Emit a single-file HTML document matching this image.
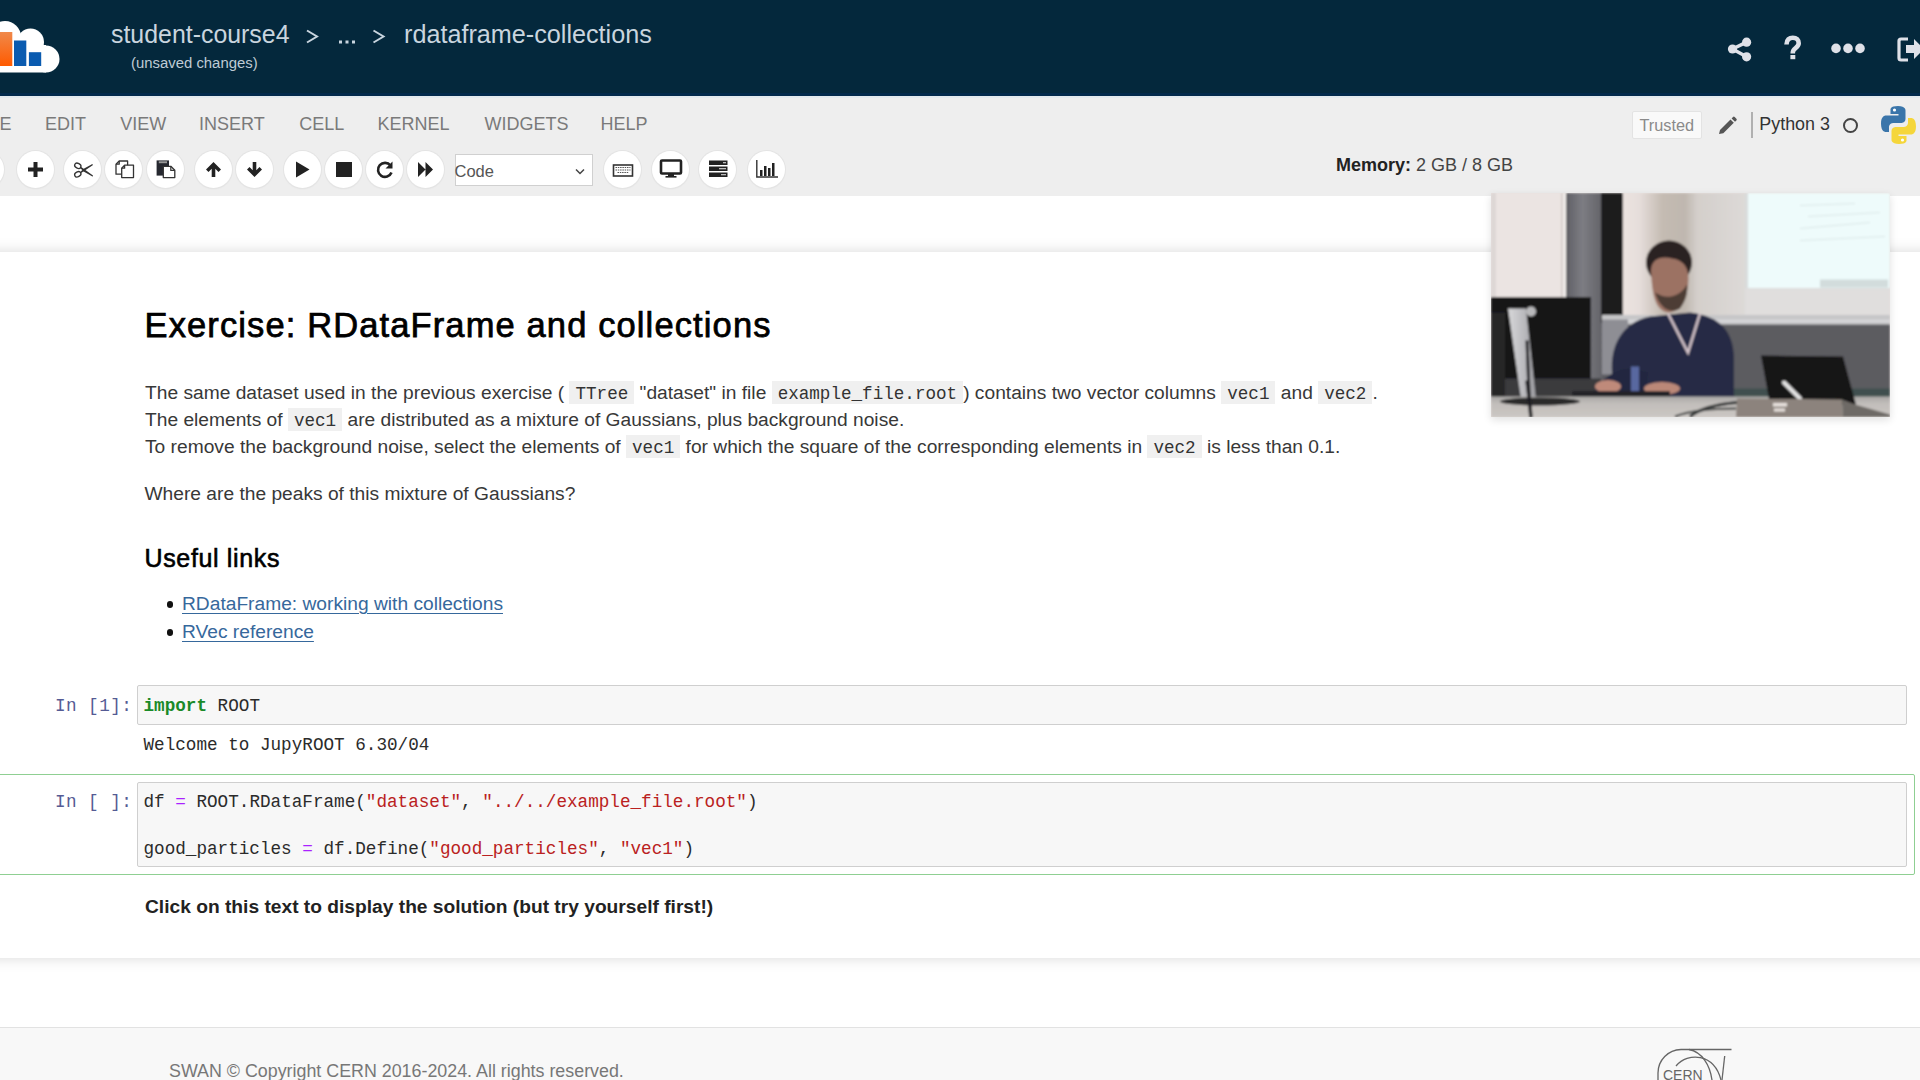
<!DOCTYPE html>
<html><head><meta charset="utf-8">
<style>
*{margin:0;padding:0;box-sizing:border-box}
html,body{width:1920px;height:1080px;overflow:hidden;background:#fff;font-family:"Liberation Sans",sans-serif}
.a{position:absolute;white-space:pre;line-height:1}
.m{font-family:"Liberation Mono",monospace}
#hdr{position:absolute;left:0;top:0;width:1920px;height:96px;background:#04283c}
#hdr .t{color:#c9d5df;font-size:25.2px}
#menu{position:absolute;left:0;top:96px;width:1920px;height:100px;background:#eeeeee}
.mi{font-size:18px;color:#7a7a7a;top:115px}
.btn{position:absolute;top:151px;width:37px;height:37px;border-radius:50%;background:#fff;box-shadow:0 0 0 1px #e4e4e4,0 1px 2px rgba(0,0,0,.06)}
.btn svg{position:absolute;left:0;top:0}
#nb{position:absolute;left:-20px;top:252px;width:1960px;height:706px;background:#fff;box-shadow:0 0 12px 1px rgba(87,87,87,.2)}
.p{font-size:19.2px;color:#383838}
code{font-family:"Liberation Mono",monospace;font-size:17.6px;background:#f0f0f0;padding:2.5px 6px 0.3px 6px;color:#333}
.ln{color:#36689c;text-decoration:underline;text-decoration-thickness:1px;text-underline-offset:3px}
.pr{font-size:17.65px;color:#555b94;letter-spacing:0.45px}
.cd{font-size:17.65px;color:#2b2b2b}
.kw{color:#1a8a28;font-weight:bold}
.op{color:#aa22ff}
.st{color:#ba2121}
#foot{position:absolute;left:0;top:1027px;width:1920px;height:53px;background:#f8f8f8;border-top:1px solid #e2e2e2}
</style></head><body>

<!-- header -->
<div id="hdr">
  <svg class="a" style="left:0;top:0" width="80" height="96" viewBox="0 0 80 96">
    <g fill="#fff">
      <circle cx="5" cy="37" r="16"/>
      <circle cx="30.5" cy="42" r="13.5"/>
      <circle cx="46" cy="59" r="13.5"/>
      <rect x="-10" y="45" width="56" height="27.5"/>
    </g>
    <defs><linearGradient id="og" x1="0" y1="0" x2="0" y2="1"><stop offset="0" stop-color="#f0894a"/><stop offset="1" stop-color="#ff5a00"/></linearGradient></defs>
    <rect x="0" y="32" width="12.3" height="34" fill="url(#og)"/>
    <rect x="14" y="40.5" width="12.3" height="25.5" fill="#0a5bb0"/>
    <rect x="28.9" y="52.2" width="12.3" height="13.8" fill="#0a5bb0"/>
  </svg>
  <div class="a t" style="left:111px;top:21.5px;font-size:24.9px">student-course4</div>
  <svg class="a" style="left:300px;top:25px" width="100" height="25" viewBox="0 0 100 25">
    <polyline points="7,5.5 17,11.5 7,17.5" fill="none" stroke="#c9d5df" stroke-width="2"/>
    <polyline points="73.5,5.5 83.5,11.5 73.5,17.5" fill="none" stroke="#c9d5df" stroke-width="2"/>
    <rect x="39" y="15.5" width="3" height="3" fill="#c9d5df"/>
    <rect x="45.5" y="15.5" width="3" height="3" fill="#c9d5df"/>
    <rect x="52" y="15.5" width="3" height="3" fill="#c9d5df"/>
  </svg>
  <div class="a t" style="left:404px;top:21.5px">rdataframe-collections</div>
  <div class="a" style="left:131px;top:55.5px;font-size:14.9px;color:#bfcbd5">(unsaved changes)</div>

  <!-- right icons -->
  <svg class="a" style="left:1720px;top:25px" width="200" height="50" viewBox="0 0 200 50">
    <g fill="#dfe1e8" stroke="#dfe1e8">
      <line x1="12.5" y1="24" x2="26.6" y2="17.2" stroke-width="3.5"/>
      <line x1="12.5" y1="24" x2="26.6" y2="31.8" stroke-width="3.5"/>
      <circle cx="12.5" cy="24" r="4.6" stroke="none"/>
      <circle cx="26.6" cy="17.2" r="4.6" stroke="none"/>
      <circle cx="26.6" cy="31.8" r="4.6" stroke="none"/>
      <circle cx="116" cy="23.4" r="4.8" stroke="none"/>
      <circle cx="128" cy="23.4" r="4.8" stroke="none"/>
      <circle cx="140" cy="23.4" r="4.8" stroke="none"/>
    </g>
    <path d="M66.5 19.5 C66.5 14.5 69.5 12.7 72.8 12.7 C76.5 12.7 78.7 15 78.7 18.3 C78.7 22.8 72.8 23.3 72.8 27.6 V28.4" fill="none" stroke="#dfe1e8" stroke-width="4.6"/><rect x="70.4" y="30" width="4.9" height="4.2" fill="#dfe1e8"/>
    <path d="M188 14 h-7 a2 2 0 0 0 -2 2 v17 a2 2 0 0 0 2 2 h7" fill="none" stroke="#dfe1e8" stroke-width="3.2"/>
    <path d="M186 20 h8 v-6 l10 10 l-10 10 v-6 h-8 z" fill="#dfe1e8"/>
  </svg>
</div>

<!-- menubar + toolbar -->
<div id="menu"></div>
<div class="a" style="left:0;top:93px;width:1920px;height:3px;background:#032a4c"></div>
<div class="a" style="left:0;top:96px;width:1920px;height:1.5px;background:#e4eaee"></div>
<div class="a mi" style="left:-0.5px">E</div>
<div class="a mi" style="left:45px">EDIT</div>
<div class="a mi" style="left:120.2px">VIEW</div>
<div class="a mi" style="left:199px">INSERT</div>
<div class="a mi" style="left:299.2px">CELL</div>
<div class="a mi" style="left:377.5px">KERNEL</div>
<div class="a mi" style="left:484.5px">WIDGETS</div>
<div class="a mi" style="left:600.5px">HELP</div>

<div class="a" style="left:1631.5px;top:110.5px;width:70px;height:28px;background:#f9f9f9;border:1px solid #e3e3e3;border-radius:2px"></div>
<div class="a" style="left:1639.5px;top:117.2px;font-size:16.3px;color:#8a8a8a">Trusted</div>
<svg class="a" style="left:1716px;top:115px" width="22" height="20" viewBox="0 0 22 20">
  <path d="M4 15 L14.5 4.5 L17.8 7.8 L7.3 18.3 L3 19 Z" fill="#555"/>
  <path d="M15.6 3.4 L17 2 a1.2 1.2 0 0 1 1.7 0 L20.4 3.7 a1.2 1.2 0 0 1 0 1.7 L19 6.8 Z" fill="#555"/>
</svg>
<div class="a" style="left:1751px;top:112px;width:2px;height:26px;background:#b0b0b0"></div>
<div class="a" style="left:1759.3px;top:115.6px;font-size:17.9px;color:#333">Python 3</div>
<div class="a" style="left:1842.5px;top:117.8px;width:15.2px;height:15.2px;border:2.5px solid #444;border-radius:50%"></div>
<svg class="a" style="left:1878px;top:104px" width="42" height="42" viewBox="0 0 42 42">
  <path d="M20 2 C12 2 12.5 5.5 12.5 5.5 V10 H20.5 V11.5 H8 C8 11.5 3 11 3 19.5 C3 28 7.5 28 7.5 28 H11 V23.5 C11 23.5 10.8 19 15.3 19 H23 C23 19 27.5 19 27.5 14.8 V6.5 C27.5 6.5 28 2 20 2 Z" fill="#3a75aa"/>
  <circle cx="16.5" cy="6" r="1.6" fill="#fff"/>
  <path d="M21 40 C29 40 28.5 36.5 28.5 36.5 V32 H20.5 V30.5 H33 C33 30.5 38 31 38 22.5 C38 14 33.5 14 33.5 14 H30 V18.5 C30 18.5 30.2 23 25.7 23 H18 C18 23 13.5 23 13.5 27.2 V35.5 C13.5 35.5 13 40 21 40 Z" fill="#f5d63a"/>
  <circle cx="24.5" cy="36" r="1.6" fill="#fff"/>
</svg>

<!-- toolbar buttons -->
<div class="btn" style="left:-33px"></div>
<div class="btn" style="left:16.5px"><svg width="37" height="37" viewBox="0 0 37 37"><path d="M16.5 11 h4 v5.5 h5.5 v4 h-5.5 v5.5 h-4 v-5.5 h-5.5 v-4 h5.5 z" fill="#222"/></svg></div>
<div class="btn" style="left:63.5px"><svg width="37" height="37" viewBox="0 0 37 37"><g fill="none" stroke="#333" stroke-width="1.3"><ellipse cx="13.8" cy="14.8" rx="3.3" ry="2.4" transform="rotate(28 13.8 14.8)"/><ellipse cx="13.8" cy="23.3" rx="3.3" ry="2.4" transform="rotate(-28 13.8 23.3)"/><path d="M16.8 16.6 L28.3 24.8 L19.5 19.6 Z" stroke-linejoin="round"/><path d="M16.8 21.5 L28.3 13.8 L19.5 18.6 Z" stroke-linejoin="round"/></g></svg></div>
<div class="btn" style="left:104.5px"><svg width="37" height="37" viewBox="0 0 37 37"><g fill="#fff" stroke="#333" stroke-width="1.3" stroke-linejoin="round"><path d="M14.2 10 H22.6 V23.2 H11 V13.2 Z"/><path d="M14.2 10 V13.2 H11" fill="none"/><path d="M19.6 14.2 H28.5 V26.6 H16.7 V17.2 Z"/><path d="M19.6 14.2 V17.2 H16.7" fill="none"/></g></svg></div>
<div class="btn" style="left:146.5px"><svg width="37" height="37" viewBox="0 0 37 37"><rect x="9.6" y="9.4" width="12.4" height="15.2" fill="#262830"/><rect x="11.8" y="10.3" width="8.2" height="1.9" fill="#999"/><path d="M16.3 15.3 H23.8 L27.8 19.3 V26.6 H16.3 Z" fill="#fff" stroke="#333" stroke-width="1.3" stroke-linejoin="round"/><path d="M23.8 15.3 V19.3 H27.8" fill="none" stroke="#333" stroke-width="1.2"/></svg></div>
<div class="btn" style="left:194.5px"><svg width="37" height="37" viewBox="0 0 37 37"><path d="M18.5 11 L26 18.5 L23.5 21 L20.3 17.8 V26 H16.7 V17.8 L13.5 21 L11 18.5 Z" fill="#222"/></svg></div>
<div class="btn" style="left:235.5px"><svg width="37" height="37" viewBox="0 0 37 37"><path d="M18.5 26 L26 18.5 L23.5 16 L20.3 19.2 V11 H16.7 V19.2 L13.5 16 L11 18.5 Z" fill="#222"/></svg></div>
<div class="btn" style="left:283.5px"><svg width="37" height="37" viewBox="0 0 37 37"><path d="M12 10.5 L25.5 18.5 L12 26.5 Z" fill="#222"/></svg></div>
<div class="btn" style="left:324.5px"><svg width="37" height="37" viewBox="0 0 37 37"><rect x="11" y="11" width="16" height="15" fill="#222"/></svg></div>
<div class="btn" style="left:366px"><svg width="37" height="37" viewBox="0 0 37 37"><path d="M24.5 14.5 A7 7 0 1 0 25.5 21.5" fill="none" stroke="#222" stroke-width="2.6"/><path d="M26.5 10.5 V17.5 H19.5 Z" fill="#222"/></svg></div>
<div class="btn" style="left:406.5px"><svg width="37" height="37" viewBox="0 0 37 37"><path d="M11 11 L18.5 18.5 L11 26 Z M18.5 11 L26 18.5 L18.5 26 Z" fill="#222"/></svg></div>

<div class="a" style="left:454.5px;top:153.5px;width:138.5px;height:32px;background:#fff;border:1px solid #d0d0d0"></div>
<div class="a" style="left:454.5px;top:163.3px;font-size:16.5px;color:#555">Code</div>
<svg class="a" style="left:572px;top:165px" width="16" height="12" viewBox="0 0 16 12"><polyline points="4,4.5 8,8.5 12,4.5" fill="none" stroke="#444" stroke-width="1.5"/></svg>

<div class="btn" style="left:603.5px"><svg width="37" height="37" viewBox="0 0 37 37"><rect x="9.5" y="14" width="19" height="11" fill="none" stroke="#333" stroke-width="1.6"/><path d="M11.5 16.5 h15 M11.5 19 h15 M13.5 21.5 h11" stroke="#555" stroke-width="1.2" stroke-dasharray="1.5 0.8"/></svg></div>
<div class="btn" style="left:651.5px"><svg width="37" height="37" viewBox="0 0 37 37"><rect x="9" y="9.5" width="20" height="13" rx="1" fill="#fff" stroke="#222" stroke-width="2.6"/><rect x="16" y="23" width="6" height="2.5" fill="#222"/><rect x="13.5" y="25" width="11" height="1.6" fill="#222"/></svg></div>
<div class="btn" style="left:699px"><svg width="37" height="37" viewBox="0 0 37 37"><rect x="10" y="9.5" width="18.5" height="4.5" fill="#222"/><rect x="10" y="15.5" width="18.5" height="4.5" fill="#222"/><rect x="10" y="21.5" width="18.5" height="4.5" fill="#222"/><rect x="24" y="11" width="3" height="1.3" fill="#bbb"/><rect x="20" y="17" width="7" height="1.3" fill="#bbb"/><rect x="22" y="23" width="5" height="1.3" fill="#bbb"/></svg></div>
<div class="btn" style="left:747.5px"><svg width="37" height="37" viewBox="0 0 37 37"><path d="M8.8 9 V26 H30" fill="none" stroke="#333" stroke-width="1.4"/><rect x="12" y="19" width="2.5" height="6" fill="#222"/><rect x="16" y="15" width="2.5" height="10" fill="#222"/><rect x="20" y="17" width="2.5" height="8" fill="#222"/><rect x="24" y="12" width="2.5" height="13" fill="#222"/></svg></div>

<div class="a" style="left:1336px;top:156.2px;font-size:18px;color:#222;font-weight:bold">Memory: <span style="font-weight:normal;color:#444">2 GB / 8 GB</span></div>

<!-- notebook container -->
<div id="nb"></div>

<div class="a" style="left:144.5px;top:308.3px;font-size:34.5px;color:#000;-webkit-text-stroke:0.75px #000;letter-spacing:1.12px">Exercise: RDataFrame and collections</div>

<div class="a p" style="left:145px;top:382.7px">The same dataset used in the previous exercise ( <code>TTree</code> "dataset" in file <code>example_file.root</code>) contains two vector columns <code>vec1</code> and <code>vec2</code>.</div>
<div class="a p" style="left:145px;top:409.7px">The elements of <code>vec1</code> are distributed as a mixture of Gaussians, plus background noise.</div>
<div class="a p" style="left:145px;top:436.9px">To remove the background noise, select the elements of <code>vec1</code> for which the square of the corresponding elements in <code>vec2</code> is less than 0.1.</div>
<div class="a p" style="left:144.5px;top:484px">Where are the peaks of this mixture of Gaussians?</div>

<div class="a" style="left:144.5px;top:546.4px;font-size:25px;color:#000;-webkit-text-stroke:0.6px #000;letter-spacing:0.65px">Useful links</div>
<div class="a" style="left:166.6px;top:601.3px;width:6.6px;height:6.6px;border-radius:50%;background:#111"></div>
<div class="a" style="left:166.6px;top:629.4px;width:6.6px;height:6.6px;border-radius:50%;background:#111"></div>
<div class="a p ln" style="left:182px;top:593.7px">RDataFrame: working with collections</div>
<div class="a p ln" style="left:182px;top:622.3px">RVec reference</div>

<!-- cell 1 -->
<div class="a" style="left:137px;top:685px;width:1770px;height:39.5px;background:#f7f7f7;border:1px solid #cfcfcf;border-radius:2px"></div>
<div class="a m pr" style="left:55px;top:697.9px">In [1]:</div>
<div class="a m cd" style="left:143.5px;top:697.9px"><span class="kw">import</span> ROOT</div>
<div class="a m cd" style="left:143.5px;top:736.5px">Welcome to JupyROOT 6.30/04</div>

<!-- cell 2 -->
<div class="a" style="left:-10px;top:774px;width:1924.5px;height:101px;border:1px solid #8fcf92;border-radius:2px"></div>
<div class="a" style="left:137px;top:782px;width:1770px;height:85px;background:#f7f7f7;border:1px solid #cfcfcf;border-radius:2px"></div>
<div class="a m pr" style="left:55px;top:794.4px">In [ ]:</div>
<div class="a m cd" style="left:143.5px;top:794.4px">df <span class="op">=</span> ROOT.RDataFrame(<span class="st">"dataset"</span>, <span class="st">"../../example_file.root"</span>)</div>
<div class="a m cd" style="left:143.5px;top:841.3px">good_particles <span class="op">=</span> df.Define(<span class="st">"good_particles"</span>, <span class="st">"vec1"</span>)</div>

<div class="a" style="left:145px;top:897.4px;font-size:19.2px;color:#222;font-weight:bold">Click on this text to display the solution (but try yourself first!)</div>

<!-- footer -->
<div id="foot"></div>
<div class="a" style="left:169px;top:1062.8px;font-size:17.85px;color:#777">SWAN © Copyright CERN 2016-2024. All rights reserved.</div>
<svg class="a" style="left:1640px;top:1040px" width="110" height="40" viewBox="0 0 110 40">
  <g fill="none" stroke="#666" stroke-width="1.3">
    <path d="M41 9.5 A23.5 23.5 0 0 0 18 33 L18 40"/>
    <path d="M41 9.5 H91.5"/>
    <path d="M49 9.5 C62 12 70 25 72 40"/>
    <path d="M36 26 C48 12 74 13 81 40"/>
    <path d="M84.7 16 L82 40"/>
  </g>
  <text x="23" y="40" font-family="Liberation Sans" font-size="14" fill="#666">CERN</text>
</svg>

<!-- video overlay -->
<div class="a" style="left:1491px;top:192.5px;width:399px;height:224px;overflow:hidden;background:#e9e2e0;box-shadow:0 3px 8px rgba(0,0,0,.12)">
<svg width="399" height="224" viewBox="1491 192.5 399 224" style="position:absolute;left:0;top:0">
  <defs>
    <linearGradient id="wallg" x1="0" y1="0" x2="1" y2="0">
      <stop offset="0" stop-color="#ebe3e0"/><stop offset="0.13" stop-color="#e6dedb"/><stop offset="0.32" stop-color="#c4bbb2"/><stop offset="0.5" stop-color="#bfb7af"/><stop offset="0.6" stop-color="#d4cfcb"/><stop offset="1" stop-color="#dddad8"/>
    </linearGradient>
    <linearGradient id="doorg" x1="0" y1="0" x2="1" y2="0">
      <stop offset="0" stop-color="#5f5f65"/><stop offset="0.45" stop-color="#7d7d83"/><stop offset="1" stop-color="#626268"/>
    </linearGradient>
    <linearGradient id="silv" x1="0" y1="0" x2="1" y2="0">
      <stop offset="0" stop-color="#d8d8da"/><stop offset="0.6" stop-color="#b8b8bc"/><stop offset="1" stop-color="#9a9a9e"/>
    </linearGradient>
    <linearGradient id="deskg" x1="0" y1="0" x2="0" y2="1">
      <stop offset="0" stop-color="#a9a7a5"/><stop offset="0.35" stop-color="#c2bebb"/><stop offset="1" stop-color="#cbc7c3"/>
    </linearGradient>
  </defs>
  <filter id="bl" x="-5%" y="-5%" width="110%" height="110%"><feGaussianBlur stdDeviation="0.8"/></filter><g filter="url(#bl)">
  <!-- left wall -->
  <rect x="1491" y="192.5" width="72" height="224" fill="#ebe4e2"/>
  <rect x="1491" y="192.5" width="5" height="224" fill="#ddd7d5"/>
  <rect x="1561" y="192.5" width="2" height="224" fill="#d6cecc"/>
  <rect x="1563" y="192.5" width="3" height="224" fill="#f2eeec"/>
  <!-- door frame -->
  <rect x="1566" y="192.5" width="36.5" height="206" fill="url(#doorg)"/>
  <rect x="1601" y="192.5" width="22" height="130" fill="#1c1c1e"/>
  <!-- middle wall -->
  <rect x="1623" y="192.5" width="124" height="130" fill="url(#wallg)"/>
  <!-- screen -->
  <rect x="1745" y="192.5" width="145" height="97" fill="#d9dcdc"/>
  <rect x="1748" y="192.5" width="142" height="95" fill="#eefbfb"/>
  <g stroke="#d9e6e6" stroke-width="1.2">
    <line x1="1800" y1="205" x2="1855" y2="203"/><line x1="1808" y1="216" x2="1880" y2="212"/>
    <line x1="1800" y1="228" x2="1870" y2="222"/><line x1="1800" y1="240" x2="1885" y2="236"/>
  </g>
  <rect x="1820" y="279" width="68" height="8" fill="#d2dcdc"/>
  <rect x="1745" y="288" width="145" height="30" fill="#e0dedd"/>
  <!-- partition -->
  <rect x="1602" y="314.5" width="288" height="10" fill="#c6c6c8"/>
  <rect x="1602" y="319" width="288" height="3" fill="#d6d6d8"/>
  <rect x="1602" y="324" width="288" height="75" fill="#5c5c60"/>
  <rect x="1728" y="388" width="162" height="9" fill="#40504f"/>
  <rect x="1602" y="319" width="26" height="55" fill="#8e8e94"/>
  <!-- left monitor -->
  <rect x="1491" y="296.5" width="100" height="82" fill="#161618"/>
  <rect x="1491" y="378" width="110" height="20" fill="#3a3a3d"/>
  <rect x="1491" y="312" width="14" height="86" fill="#262628"/>
  <polygon points="1508,308 1526,308 1536,398 1521,398" fill="url(#silv)"/>
  <circle cx="1531" cy="311" r="5" fill="#b9b9bb"/>
  <line x1="1527" y1="340" x2="1530" y2="416" stroke="#1e1e20" stroke-width="3"/>
  <!-- person -->
  <path d="M1617 400 L1612 372 C1610 345 1622 322 1650 316 L1690 312 C1720 316 1734 330 1734 360 L1734 400 Z" fill="#252a44"/>
  <path d="M1594 392 C1600 380 1612 370 1630 368 L1648 372 L1645 396 Z" fill="#23283f"/>
  <ellipse cx="1669" cy="262" rx="23" ry="22" fill="#2b2321"/>
  <path d="M1651 270 C1651 258 1662 255 1672 258 C1686 260 1690 270 1688 285 C1686 302 1678 312 1668 312 C1656 310 1652 296 1651 270 Z" fill="#9c7264"/>
  <path d="M1655 292 C1660 308 1670 314 1680 308 C1686 300 1688 292 1687 284 C1680 296 1668 300 1655 292 Z" fill="#4e3d36"/>
  <path d="M1668 313 L1688 352 L1700 313" fill="none" stroke="#d6c6cc" stroke-width="2.4"/>
  <!-- hands -->
  <ellipse cx="1608" cy="386" rx="13" ry="6.5" fill="#bf8a7a"/>
  <ellipse cx="1662" cy="388" rx="18" ry="6.5" fill="#bb8878"/>
  <rect x="1631" y="366" width="8" height="26" fill="#5868a0"/>
  <!-- keyboard -->
  <rect x="1572" y="390.5" width="98" height="8" fill="#202426"/>
  <!-- desk -->
  <rect x="1491" y="396" width="399" height="21" fill="url(#deskg)"/>
  <ellipse cx="1540" cy="401" rx="40" ry="4" fill="#2a2a2c"/>
  <path d="M1527 380 C1529 395 1530 405 1531 417" fill="none" stroke="#1e1e20" stroke-width="3.5"/>
  <path d="M1690 416 C1700 408 1715 404 1737 402" fill="none" stroke="#2e3232" stroke-width="3"/><path d="M1675 416 C1690 410 1710 408 1736 408" fill="none" stroke="#3a3e3e" stroke-width="2"/>
  <!-- laptop -->
  <polygon points="1761,355 1843,356 1856,404 1770,404" fill="#141214"/>
  <line x1="1784" y1="382" x2="1800" y2="398" stroke="#e4e4e4" stroke-width="4" stroke-linecap="round"/>
  <polygon points="1737,398 1842,399 1843,416.5 1736,416.5" fill="#8c837d"/>
  <polygon points="1842,399 1855,404 1890,414 1890,416.5 1843,416.5" fill="#6e6a66"/>
  <rect x="1773" y="402.5" width="14" height="3.5" fill="#e8e2de"/>
  <rect x="1774" y="408" width="11" height="3" fill="#e8e2de"/>
</g>
</svg>
</div>

</body></html>
